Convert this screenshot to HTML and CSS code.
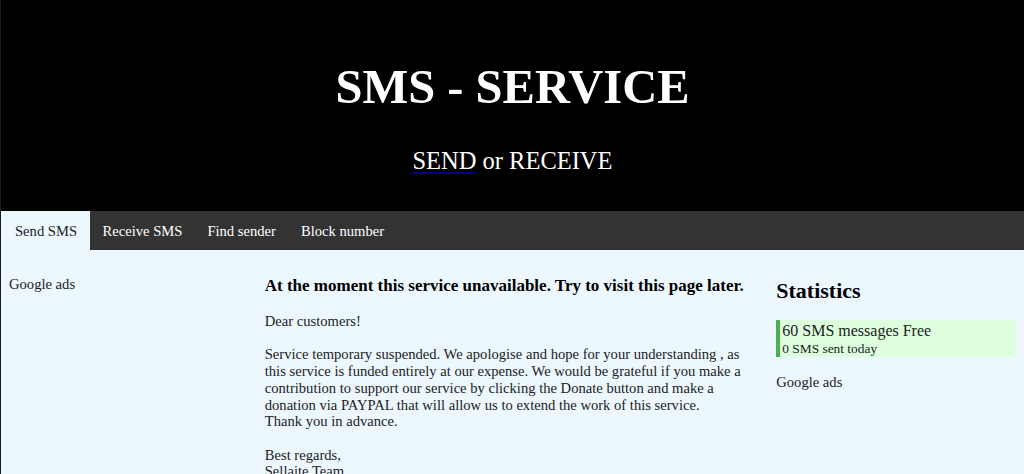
FILE: index.html
```html
<!DOCTYPE html>
<html lang="en">
<head>
<meta charset="utf-8">
<title>SMS - SERVICE</title>
<link rel="stylesheet" href="styles.css">
</head>
<body>
<div class="page">
  <header class="hero">
    <h1 class="title">SMS - SERVICE</h1>
    <p class="subtitle"><a class="sublink" href="#">SEND</a> or RECEIVE</p>
  </header>
  <nav class="tabs">
    <a class="tab active" href="#">Send SMS</a>
    <a class="tab" href="#">Receive SMS</a>
    <a class="tab" href="#">Find sender</a>
    <a class="tab" href="#">Block number</a>
  </nav>
  <main class="content">
    <aside class="col left">
      <p class="ads">Google ads</p>
    </aside>
    <section class="col middle">
      <h3 class="notice">At the moment this service unavailable. Try to visit this page later.</h3>
      <p class="letter">Dear customers!<br><br>Service temporary suspended. We apologise and hope for your understanding , as this service is funded entirely at our expense. We would be grateful if you make a contribution to support our service by clicking the Donate button and make a donation via PAYPAL that will allow us to extend the work of this service.<br>Thank you in advance.<br><br>Best regards,<br>Sellaite Team</p>
    </section>
    <aside class="col right">
      <h2 class="stats-title">Statistics</h2>
      <div class="stat-box">
        <div class="stat-main">60 SMS messages Free</div>
        <div class="stat-sub">0 SMS sent today</div>
      </div>
      <p class="ads">Google ads</p>
    </aside>
  </main>
</div>
</body>
</html>
```

FILE: styles.css
```css
html, body {
  margin: 0;
  padding: 0;
  height: 100%;
  overflow: hidden;
}
body {
  font-family: "Liberation Serif", "Times New Roman", serif;
  background: #ecf7fe;
  color: #222;
}
.page {
  border-left: 1px solid #1c1c1c;
  min-height: 100%;
  box-sizing: border-box;
}
.hero {
  background: #000;
  color: #fff;
  text-align: center;
  padding: 59px 0 36px;
}
.title {
  margin: 0;
  font-size: 48.5px;
  font-weight: bold;
  line-height: 55px;
}
.subtitle {
  margin: 33px 0 0;
  font-size: 24.5px;
  line-height: 28px;
}
.sublink {
  color: #fff;
  text-decoration: underline;
  text-decoration-color: #00007a;
  text-underline-offset: 3px;
  text-decoration-thickness: 2px;
}
.tabs {
  display: flex;
  background: #333;
}
.tab {
  display: block;
  padding: 12px 12.5px 11px;
  font-size: 14.6px;
  line-height: 16px;
  color: #fff;
  text-decoration: none;
}
.tab.active {
  background: #ecf7fe;
  color: #222;
  padding-left: 14px;
  padding-right: 13px;
}
.content {
  display: grid;
  grid-template-columns: 25% 50% 25%;
  background: #ecf7fe;
  padding-top: 1px;
}
.col {
  padding: 0 8px;
}
.ads {
  margin: 25px 0 0;
  font-size: 14.6px;
  line-height: 17px;
}
.notice {
  margin: 25px 0 0;
  font-size: 17px;
  line-height: 20px;
  font-weight: bold;
  color: #000;
}
.letter {
  margin: 17px 0 0;
  font-size: 14.6px;
  line-height: 16.7px;
}
.stats-title {
  margin: 27px 0 0;
  font-size: 22px;
  line-height: 25px;
  font-weight: bold;
  color: #000;
}
.stat-box {
  margin-top: 17px;
  background: #ddffdd;
  border-left: 4px solid #4caf50;
  padding: 1px 2px 0 2px;
}
.stat-main {
  font-size: 16px;
  line-height: 19px;
}
.stat-sub {
  font-size: 13.4px;
  line-height: 17px;
}
.right .ads {
  margin-top: 17px;
}
```
